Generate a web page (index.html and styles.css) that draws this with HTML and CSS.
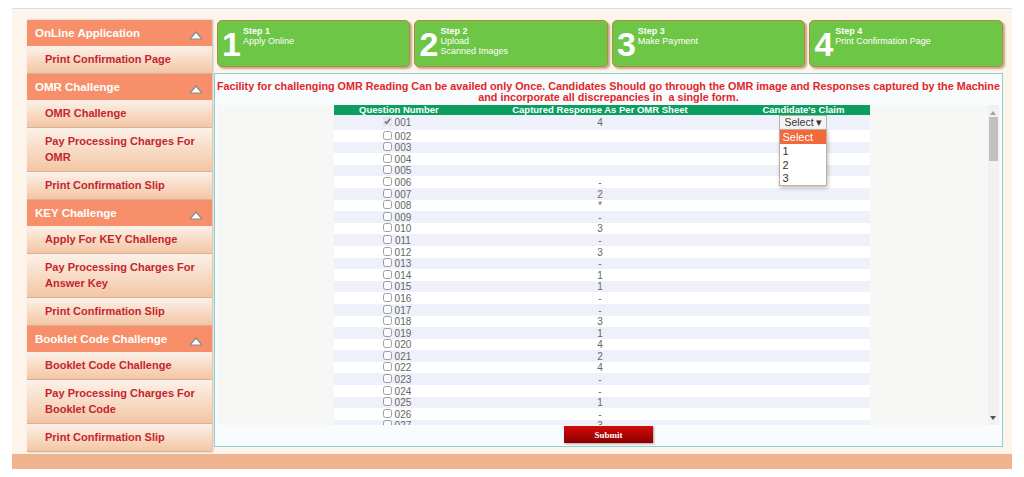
FILE: index.html
```html
<!DOCTYPE html>
<html lang="en">
<head>
    <meta charset="UTF-8">
    <meta name="viewport" content="width=device-width, initial-scale=1.0">
    <title>OMR Challenge</title>
    <link rel="stylesheet" href="styles.css">
</head>
<body>
    <div class="frame">
        <div class="main-area">
            <div class="sidebar">
                <div class="menu-head">OnLine Application <svg class="caret" width="14" height="9" viewBox="0 0 14 9"><polygon points="7,1 13,8 1,8" fill="#fff" stroke="#8a8a8a" stroke-width="1.2"/></svg></div>
                <a class="menu-item">Print Confirmation Page</a>
                <div class="menu-head">OMR Challenge <svg class="caret" width="14" height="9" viewBox="0 0 14 9"><polygon points="7,1 13,8 1,8" fill="#fff" stroke="#8a8a8a" stroke-width="1.2"/></svg></div>
                <a class="menu-item">OMR Challenge</a>
                <a class="menu-item">Pay Processing Charges For OMR</a>
                <a class="menu-item">Print Confirmation Slip</a>
                <div class="menu-head">KEY Challenge <svg class="caret" width="14" height="9" viewBox="0 0 14 9"><polygon points="7,1 13,8 1,8" fill="#fff" stroke="#8a8a8a" stroke-width="1.2"/></svg></div>
                <a class="menu-item">Apply For KEY Challenge</a>
                <a class="menu-item">Pay Processing Charges For Answer Key</a>
                <a class="menu-item">Print Confirmation Slip</a>
                <div class="menu-head">Booklet Code Challenge <svg class="caret" width="14" height="9" viewBox="0 0 14 9"><polygon points="7,1 13,8 1,8" fill="#fff" stroke="#8a8a8a" stroke-width="1.2"/></svg></div>
                <a class="menu-item">Booklet Code Challenge</a>
                <a class="menu-item">Pay Processing Charges For Booklet Code</a>
                <a class="menu-item">Print Confirmation Slip</a>
            </div>

            <div class="content">
                <div class="steps">
                    <div class="step"><span class="step-num">1</span><div class="step-text"><b>Step 1</b>Apply Online</div></div>
                    <div class="step"><span class="step-num">2</span><div class="step-text"><b>Step 2</b>Upload<br>Scanned Images</div></div>
                    <div class="step"><span class="step-num">3</span><div class="step-text"><b>Step 3</b>Make Payment</div></div>
                    <div class="step"><span class="step-num">4</span><div class="step-text"><b>Step 4</b>Print Confirmation Page</div></div>
                </div>

                <div class="challenge-box">
                    <p class="notice">Facility for challenging OMR Reading Can be availed only Once. Candidates Should go through the OMR image and Responses captured by the Machine<br>and incorporate all discrepancies in &nbsp;a single form.</p>
                    <div class="scroll-area">
                        <div class="table-wrap">
                            <table class="omr-table">
                                <thead>
                                    <tr>
                                        <th class="col-q">Question Number</th>
                                        <th class="col-r">Captured Response As Per OMR Sheet</th>
                                        <th class="col-c">Candidate's Claim</th>
                                    </tr>
                                </thead>
                                <tbody id="omr-rows"></tbody>
                            </table>
                        </div>
                        <div class="scrollbar">
                            <span class="arrow-up"></span>
                            <span class="thumb"></span>
                            <span class="arrow-down"></span>
                        </div>
                    </div>
                    <button class="btn-submit">Submit</button>
                </div>
            </div>
        </div>
        <div class="footer-band"></div>
    </div>

    <script>
        const responses = ['4', '', '', '', '', '-', '2', '*', '-', '3', '-', '3', '-', '1', '1', '-', '-', '3', '1', '4', '2', '4', '-', '-', '1', '-', '3'];
        const body = document.getElementById('omr-rows');

        responses.forEach((resp, i) => {
            const num = String(i + 1).padStart(3, '0');
            const row = document.createElement('tr');
            let claim = '';
            if (i === 0) {
                row.className = 'first-row';
                claim = `
                    <div class="claim">
                        <span class="fake-select">Select &#9662;</span>
                        <ul class="dropdown">
                            <li class="active">Select</li>
                            <li>1</li>
                            <li>2</li>
                            <li>3</li>
                        </ul>
                    </div>`;
            }
            row.innerHTML = `
                <td class="col-q"><input type="checkbox" ${i === 0 ? 'checked' : ''}><span class="qnum">${num}</span></td>
                <td class="col-r">${resp}</td>
                <td class="col-c">${claim}</td>
            `;
            body.appendChild(row);
        });
    </script>
</body>
</html>
```

FILE: styles.css
```css
body {
    margin: 0;
    padding: 0;
    background: #fff;
    font-family: "Liberation Sans", Arial, sans-serif;
}

.frame {
    width: 1000px;
    margin: 8px 12px 0;
    background: #fdf4eb;
    border-top: 1px solid #dcdcdc;
}

.main-area {
    display: flex;
    padding: 11px 12px 2px 15px;
}

.footer-band {
    height: 15px;
    background: #efb48e;
}

/* sidebar */
.sidebar {
    width: 185px;
    flex: none;
    display: flex;
    flex-direction: column;
    box-shadow: 1px 0 2px rgba(0, 0, 0, 0.25);
}

.menu-head {
    height: 26px;
    line-height: 26px;
    padding-left: 8px;
    padding-right: 9px;
    background: #f7906a;
    color: #fff;
    font-size: 11.5px;
    font-weight: bold;
    display: flex;
    justify-content: space-between;
    align-items: center;
}

.caret {
    margin-top: 4px;
}

.menu-item {
    display: block;
    padding: 5px 10px 6px 18px;
    line-height: 16px;
    font-size: 11px;
    font-weight: bold;
    color: #c4262d;
    background: linear-gradient(to bottom, #fcf1e9, #f3c6a4);
    border-bottom: 1px solid #d6b196;
}

/* right column */
.content {
    flex: 1;
    margin-left: 2px;
    display: flex;
    flex-direction: column;
}

.steps {
    display: flex;
    gap: 4px;
    padding-left: 3px;
    margin-bottom: 6px;
}

.step {
    flex: 1;
    height: 47px;
    box-sizing: border-box;
    display: flex;
    align-items: flex-start;
    padding: 6px 5px 0 4px;
    background: #6dc645;
    border: 1px solid #b08b3e;
    border-radius: 5px;
    box-shadow: 2px 2px 2px rgba(120, 80, 20, 0.45);
    color: #fff;
}

.step-num {
    font-size: 34px;
    font-weight: bold;
    line-height: 30px;
    margin-top: 2px;
    margin-right: 2px;
}

.step-text {
    font-size: 9px;
    line-height: 10px;
    margin-top: -1px;
}

.step-text b {
    display: block;
}

.challenge-box {
    height: 374px;
    box-sizing: border-box;
    border: 1px solid #8dcfca;
    background: #f9fcfc;
    padding: 6px 2px 0 2px;
    display: flex;
    flex-direction: column;
}

.notice {
    margin: 0 0 2px;
    padding-top: 1px;
    text-align: center;
    color: #e2262b;
    font-size: 10.8px;
    font-weight: bold;
    line-height: 11px;
    white-space: nowrap;
}

.scroll-area {
    display: flex;
    height: 320px;
    background: #f7f7f5;
}

.table-wrap {
    flex: 1;
    overflow: hidden;
}

.omr-table {
    width: 536px;
    margin: 0 auto;
    border-collapse: collapse;
    table-layout: fixed;
    font-size: 10px;
    color: #666;
}

.omr-table th {
    box-sizing: border-box;
    background: #0b9e5e;
    color: #fff;
    font-size: 9.5px;
    font-weight: bold;
    height: 10px;
    line-height: 10px;
    padding: 0;
}

.col-q { width: 129px; }
.col-r { width: 273px; }
.col-c { width: 134px; }

.omr-table td {
    text-align: center;
    padding: 0;
    height: 11.6px;
    line-height: 11px;
    vertical-align: bottom;
}

.omr-table td.col-q {
    padding-right: 4px;
}

.omr-table tbody tr:nth-child(odd) {
    background: #eef0fa;
}

.omr-table tbody tr:nth-child(even) {
    background: #fff;
}

.omr-table tr.first-row td {
    height: 15px;
    vertical-align: middle;
}

.omr-table input[type="checkbox"] {
    width: 9px;
    height: 9px;
    margin: 0 3px 0 0;
    vertical-align: top;
    accent-color: #e2e2e2;
    opacity: 0.7;
}

.claim {
    position: relative;
    display: inline-block;
}

.fake-select {
    display: block;
    width: 46px;
    height: 13px;
    line-height: 13px;
    border: 1px solid #b5b5b5;
    background: #f4f4f4;
    color: #333;
    font-size: 10.5px;
    text-align: center;
}

.dropdown {
    position: absolute;
    top: 14px;
    left: 0;
    width: 46px;
    margin: 0;
    padding: 0;
    list-style: none;
    background: #fff;
    border: 1px solid #c9a9a0;
    box-shadow: 1px 2px 4px rgba(0, 0, 0, 0.25);
    text-align: left;
    color: #333;
    font-size: 11px;
    z-index: 5;
}

.dropdown li {
    height: 13.8px;
    line-height: 14px;
    padding-left: 2px;
}

.dropdown li.active {
    background: #f26a3c;
    color: #fff;
}

/* scrollbar drawn next to the table */
.scrollbar {
    width: 11px;
    flex: none;
    display: flex;
    flex-direction: column;
    align-items: center;
    background: #f1f1f1;
    margin-right: 1px;
    padding-top: 6px;
    box-sizing: border-box;
}

.arrow-up,
.arrow-down {
    width: 0;
    height: 0;
    border-left: 3px solid transparent;
    border-right: 3px solid transparent;
}

.arrow-up {
    border-bottom: 4px solid #a3a3a3;
}

.arrow-down {
    border-top: 4px solid #505050;
    margin-top: auto;
    margin-bottom: 5px;
}

.thumb {
    width: 9px;
    height: 44px;
    margin-top: 2px;
    background: #c1c1c1;
}

.btn-submit {
    width: 89px;
    height: 17px;
    margin: 1px auto 0;
    padding: 0;
    border: none;
    background: linear-gradient(to bottom, #d40a0a, #8c0000);
    color: #fff;
    font-family: "Liberation Serif", "Times New Roman", serif;
    font-size: 9px;
    font-weight: bold;
    box-shadow: 1px 1px 2px rgba(0, 0, 0, 0.35);
}
```
